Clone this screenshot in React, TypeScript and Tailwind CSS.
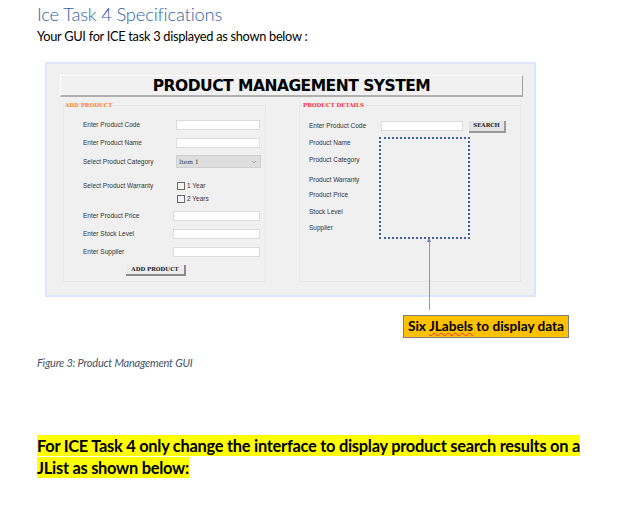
import type { ReactNode } from 'react';

const labelClass = 'text-[6.5px] leading-[10px] text-[#333] font-["Liberation_Sans",sans-serif]';
const inputClass = 'h-[10px] bg-white border border-[#dcdcdc]';

function Field({ label, className }: { label: string; className: string }) {
  return (
    <div className={`flex h-[10px] items-center ${className}`}>
      <span className={`${labelClass} w-[90px] shrink-0 whitespace-nowrap`}>{label}</span>
      <div className={`${inputClass} w-[87px]`} />
    </div>
  );
}

function Panel({ title, titleClass, className, children }: { title: string; titleClass: string; className: string; children: ReactNode }) {
  return (
    <section className={`relative h-[177px] border border-[#e6e6e6] ${className}`}>
      <span className={`absolute -top-[5px] left-0 bg-[#f0f0f0] px-px text-[5.5px] leading-[9px] font-bold whitespace-nowrap font-["DejaVu_Serif",serif] ${titleClass}`}>
        {title}
      </span>
      {children}
    </section>
  );
}

function CheckRow({ label, className }: { label: string; className?: string }) {
  return (
    <div className={`flex h-[9px] items-center gap-[2px] ${className ?? ''}`}>
      <span className="size-[8px] border border-[#6a6a6a] bg-[#f4f4f4]" />
      <span className={labelClass}>{label}</span>
    </div>
  );
}

function ProductGui() {
  return (
    <div className="ml-[8px] h-[235px] w-[491px] border-2 border-[#e1e4fd] bg-[#f0f0f0] pt-[11px] pl-[13px]">
      <div className="flex h-[22px] w-[463px] items-center justify-center border-t border-r border-b-2 border-l border-t-white border-r-[#a0a0a0] border-b-[#b0b0b0] border-l-white bg-[#f1f1f1]">
        <h2 className='mt-[2px] text-[15.5px] leading-none font-bold tracking-[-0.5px] text-black font-["DejaVu_Sans",sans-serif]'>PRODUCT MANAGEMENT SYSTEM</h2>
      </div>

      <div className="mt-[8px] flex">
        <Panel title="ADD PRODUCT" titleClass="text-[#ff7f2a]" className="ml-[3px] w-[203px] pt-[14px] pl-[19px]">
          <div className="flex h-[10px] items-center">
            <span className={`${labelClass} w-[93px] shrink-0`}>Enter Product Code</span>
            <div className={`${inputClass} w-[84px]`} />
          </div>
          <div className="mt-[8px] flex h-[10px] items-center">
            <span className={`${labelClass} w-[93px] shrink-0`}>Enter Product Name</span>
            <div className={`${inputClass} w-[84px]`} />
          </div>
          <div className="mt-[7px] flex h-[13px] items-center">
            <span className={`${labelClass} w-[93px] shrink-0`}>Select Product Category</span>
            <div className="flex h-[13px] w-[85px] items-center justify-between border border-[#d0d0d0] bg-[#dedede] px-[2px]">
              <span className='text-[6px] leading-[10px] text-[#333] font-["DejaVu_Serif",serif]'>Item 1</span>
              <svg width="6" height="4" viewBox="0 0 6 4" className="mr-[1px]"><path d="M1 1l2 2 2-2" fill="none" stroke="#9a9a9a" strokeWidth="0.8" /></svg>
            </div>
          </div>
          <div className="mt-[13px] flex h-[22px]">
            <span className={`${labelClass} w-[94px] shrink-0`}>Select Product Warranty</span>
            <div>
              <CheckRow label="1 Year" />
              <CheckRow label="2 Years" className="mt-[4px]" />
            </div>
          </div>
          <Field label="Enter Product Price" className="mt-[8px]" />
          <Field label="Enter Stock Level" className="mt-[8px]" />
          <Field label="Enter Supplier" className="mt-[8px]" />
          <button className='mt-[8px] ml-[43px] block h-[11px] w-[60px] border-r-2 border-b-2 border-r-[#8a8a8a] border-b-[#8a8a8a] bg-[#ececec] text-[5.5px] leading-none font-bold text-[#222] font-["DejaVu_Serif",serif]'>
            ADD PRODUCT
          </button>
        </Panel>

        <Panel title="PRODUCT DETAILS" titleClass="text-[#ff2d3a] ml-[2px]" className="ml-[33px] w-[222px] pt-[15px] pl-[9px]">
          <div className="flex h-[10px] items-center">
            <span className={`${labelClass} w-[72px] shrink-0`}>Enter Product Code</span>
            <div className={`${inputClass} w-[82px]`} />
            <button className='mt-[2px] ml-[6px] h-[12px] w-[37px] border-r-2 border-b-2 border-r-[#9a9a9a] border-b-[#9a9a9a] bg-[#e4e4e4] text-[5.5px] leading-none font-bold text-[#222] font-["DejaVu_Serif",serif]'>
              SEARCH
            </button>
          </div>
          <p className={`${labelClass} mt-[7px]`}>Product Name</p>
          <p className={`${labelClass} mt-[7px]`}>Product Category</p>
          <p className={`${labelClass} mt-[10px]`}>Product Warranty</p>
          <p className={`${labelClass} mt-[5px]`}>Product Price</p>
          <p className={`${labelClass} mt-[7px]`}>Stock Level</p>
          <p className={`${labelClass} mt-[6px]`}>Supplier</p>
          <div className="absolute top-[31px] left-[79px] h-[102px] w-[91px] border-2 border-dotted border-[#3f5f9e]" />
          <div className="absolute top-[134px] left-[129px] h-[70px] w-px bg-[#7f9bd0]" />
          <div className="absolute top-[132px] left-[127px] size-0 border-x-[2.5px] border-b-[4px] border-x-transparent border-b-[#5f80c0]" />
        </Panel>
      </div>
    </div>
  );
}

export default function App() {
  return (
    <main className='relative h-[518px] w-[638px] overflow-hidden bg-white pl-[37px] font-["Lato",sans-serif] text-black'>
      <h1 className="pt-[2px] text-[18.4px] leading-[24px] font-light tracking-[-0.2px] text-[#2f5fa8]">Ice Task 4 Specifications</h1>
      <p className="mt-[2px] mb-[17px] text-[12.8px] leading-[17px] tracking-[-0.29px]">Your GUI for ICE task 3 displayed as shown below :</p>
      <ProductGui />
      <p className="mt-[59px] text-[11px] leading-[14px] tracking-[-0.2px] text-[#44546a] italic">Figure 3: Product Management GUI</p>
      <div className="mt-[65px] text-[16.4px] leading-[21px] font-bold tracking-[-0.26px]">
        <p className="w-fit whitespace-nowrap bg-[#ffff00]">For ICE Task 4 only change the interface to display product search results on a</p>
        <p className="mt-px w-fit whitespace-nowrap bg-[#ffff00]">JList as shown below:</p>
      </div>
      <div className="absolute top-[315px] left-[403px] flex h-[23px] w-[166px] items-center justify-center border border-[#7f7f7f] bg-[#ffc000] text-[13.6px] leading-none font-bold whitespace-nowrap">
        <span>
          Six <span className="underline decoration-red-500 decoration-wavy decoration-1">JLabels</span> to display data
        </span>
      </div>
    </main>
  );
}
